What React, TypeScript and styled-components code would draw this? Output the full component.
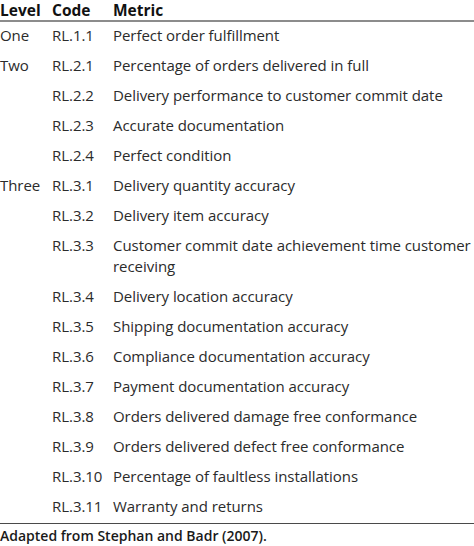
import styled, { createGlobalStyle } from 'styled-components';
import { Fragment } from 'react';

const GlobalStyle = createGlobalStyle`
  html, body {
    margin: 0;
    padding: 0;
    background: #fff;
  }
  body {
    font-family: "Open Sans", "Liberation Sans", sans-serif;
    color: #231f20;
  }
`;

const Wrap = styled.div`
  width: 474px;
  height: 546px;
  overflow: hidden;
  background: #fff;
`;

const Grid = styled.div`
  display: grid;
  grid-template-columns: 52px 61px 1fr;
  border-bottom: 1px solid #4a4a4a;
`;

const Head = styled.div`
  height: 20px;
  line-height: 20px;
  font-size: 15.5px;
  font-weight: 700;
  color: #111;
  border-bottom: 2px solid #8c8c8c;
  white-space: nowrap;
`;

const Cell = styled.div`
  padding: 3px 0 6px;
  line-height: 21px;
  font-size: 15px;
  letter-spacing: -0.05px;
  color: #2b2b2b;
  white-space: nowrap;
`;

const MetricCell = styled(Cell)`
  white-space: normal;
`;

const Note = styled.div`
  font-size: 14px;
  font-weight: 600;
  color: #1a1a1a;
  line-height: 22px;
  padding-top: 1px;
`;

const rows: [string, string, string][] = [
  ['One', 'RL.1.1', 'Perfect order fulfillment'],
  ['Two', 'RL.2.1', 'Percentage of orders delivered in full'],
  ['', 'RL.2.2', 'Delivery performance to customer commit date'],
  ['', 'RL.2.3', 'Accurate documentation'],
  ['', 'RL.2.4', 'Perfect condition'],
  ['Three', 'RL.3.1', 'Delivery quantity accuracy'],
  ['', 'RL.3.2', 'Delivery item accuracy'],
  ['', 'RL.3.3', 'Customer commit date achievement time customer receiving'],
  ['', 'RL.3.4', 'Delivery location accuracy'],
  ['', 'RL.3.5', 'Shipping documentation accuracy'],
  ['', 'RL.3.6', 'Compliance documentation accuracy'],
  ['', 'RL.3.7', 'Payment documentation accuracy'],
  ['', 'RL.3.8', 'Orders delivered damage free conformance'],
  ['', 'RL.3.9', 'Orders delivered defect free conformance'],
  ['', 'RL.3.10', 'Percentage of faultless installations'],
  ['', 'RL.3.11', 'Warranty and returns'],
];

export default function App() {
  return (
    <Wrap>
      <GlobalStyle />
      <Grid>
        <Head>Level</Head>
        <Head>Code</Head>
        <Head>Metric</Head>
        {rows.map(([level, code, metric]) => (
          <Fragment key={code}>
            <Cell>{level}</Cell>
            <Cell>{code}</Cell>
            <MetricCell>{metric}</MetricCell>
          </Fragment>
        ))}
      </Grid>
      <Note>Adapted from Stephan and Badr (2007).</Note>
    </Wrap>
  );
}
